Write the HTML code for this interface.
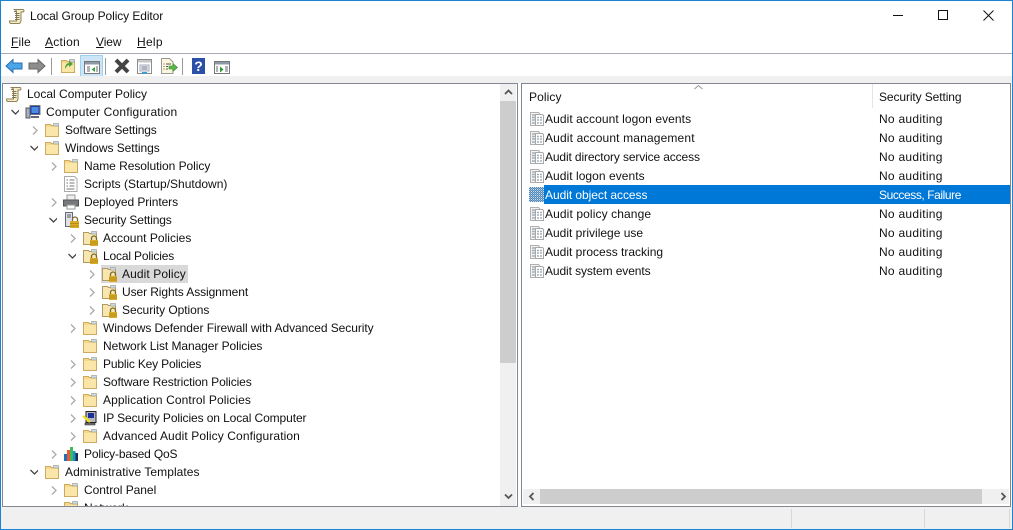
<!DOCTYPE html>
<html><head><meta charset="utf-8"><title>Local Group Policy Editor</title>
<style>
html,body{margin:0;padding:0;background:#fff}
body{width:1013px;height:530px;position:relative;overflow:hidden;font:12px "Liberation Sans",sans-serif;color:#111}
div,svg{position:absolute}
.t{white-space:nowrap;line-height:18px;height:18px;letter-spacing:0}
.n{letter-spacing:.27px}
.i{width:16px;height:16px}
.c{width:8px;height:10px}
</style></head><body>
<svg width="0" height="0" style="left:0;top:0">
<defs>
<symbol id="f" viewBox="0 0 16 16"><path d="M1.500 2.500h5l1 1h7v11h-13z" fill="#f5d88a" stroke="#cdaa62"/><path d="M2 5h12v9H2z" fill="#fae6a8"/><path d="M9.500 1.500h5V4h-5z" fill="#c6dcec" stroke="#a9a594" stroke-width=".7"/></symbol>
<symbol id="l" viewBox="0 0 16 16"><path d="M1.500 2.500h5l1 1h7v11h-13z" fill="#f8e6b0" stroke="#b19a62"/><path d="M9.500 1.500h5V4h-5z" fill="#c6dcec" stroke="#a9a594" stroke-width=".7"/><path d="M9.500 10V8.500a2.500 2.500 0 0 1 5 0V10" fill="none" stroke="#7a6a30" stroke-width="1.300"/><path d="M8 10h8v6H8z" fill="#dcae28"/><path d="M8 12h8M8 14h8" stroke="#a88010" stroke-width=".7"/></symbol>
<symbol id="p" viewBox="0 0 16 16"><path d="M1.500 1.500h8l1 1v12h-9z" fill="#f2f2f2" stroke="#b0b0b0"/><path d="M6.500 3.500h7l1 1v10h-8z" fill="#fff" stroke="#a8a8a8"/><path d="M3 4h3M3 6.500h3M8 6.500h2M11 6.500h2M8 9h2M11 9h2M8 12h2M11 12h2M3 9h3M3 12h3" stroke="#a4aeb8" stroke-width="1.400"/></symbol>
<symbol id="s" viewBox="0 0 16 16"><path d="M4.500 1.500h9.500c1.200 0 1.200 2.500 0 2.500h-2v8.500c0 1.500-1 3-2 3H2c-1 0-1.500-1.200-1.500-2.500h7V3.500c0-1-1.500-2-3-2z" fill="#f6ecc6" stroke="#8e8358"/><path d="M5 3.500c1 0 2.500 0 2.500 0M6 5.500h4.500M6 7.500h4.500M6 9.500h4.500M6 11.500h4.500" stroke="#80775a"/></symbol>
</defs>
</svg>

<div style="left:0;top:0;width:1013px;height:1px;background:#1a83d4"></div>
<div style="left:0;top:0;width:1px;height:530px;background:#1a83d4"></div>
<div style="right:0;top:0;width:1px;height:530px;background:#1a83d4"></div>
<div style="left:0;bottom:0;width:1013px;height:1px;background:#1a83d4"></div>

<!-- title bar -->
<svg class="i" style="left:9px;top:8px"><use href="#s"/></svg>
<div class="t" style="left:30px;top:7px;letter-spacing:-.09px">Local Group Policy Editor</div>
<div style="left:893px;top:15px;width:10px;height:1px;background:#111"></div>
<div style="left:938px;top:10px;width:8px;height:8px;border:1px solid #111"></div>
<svg style="left:983px;top:10px" width="11" height="11"><path d="M.5.500l10 10M10.500.500l-10 10" stroke="#111" fill="none"/></svg>

<!-- menu -->
<div class="t n" style="left:11px;top:33px;letter-spacing:.1px"><u>F</u>ile</div>
<div class="t n" style="left:45px;top:33px"><u>A</u>ction</div>
<div class="t n" style="left:96px;top:33px;letter-spacing:-.1px"><u>V</u>iew</div>
<div class="t n" style="left:137px;top:33px"><u>H</u>elp</div>
<div style="left:1px;top:53px;width:1011px;height:1px;background:#a9a9b8"></div>

<!-- toolbar -->
<svg style="left:5px;top:58px" width="18" height="16"><path d="M1 8l7-6.500V5h9v6H8v3.500z" fill="#4aa6e8" stroke="#2a6fb0"/></svg>
<svg style="left:28px;top:58px" width="18" height="16"><path d="M17 8l-7-6.500V5H1v6h9v3.500z" fill="#8d8d8d" stroke="#666"/></svg>
<div style="left:51px;top:58px;width:1px;height:17px;background:#999"></div>
<svg class="i" style="left:60px;top:58px"><use href="#f"/><path d="M5 11c0-4 2-6 4-6V2.500L13 6 9 9V7c-1 0-2 1-4 4z" fill="#4da33a"/></svg>
<div style="left:80px;top:55px;width:21px;height:20px;background:#cde6f7;border:1px solid #9fd0f0"></div>
<svg class="i" style="left:84px;top:59px"><path d="M.5 2.500h15v12H.5z" fill="#fff" stroke="#777"/><path d="M1 3h14v2.500H1z" fill="#8d99a6"/><path d="M3 8h3M3 10h3M3 12h3M12 8h2M12 10h2M12 12h2" stroke="#667"/><path d="M11 8v5l-3.500-2.500z" fill="#3aa23a"/></svg>
<div style="left:105px;top:58px;width:1px;height:17px;background:#999"></div>
<svg class="i" style="left:114px;top:58px"><path d="M2 2l12 12M14 2L2 14" stroke="#444" stroke-width="4"/></svg>
<svg class="i" style="left:137px;top:58px"><path d="M.5 1.500h14v14H.5z" fill="#fff" stroke="#8c8c8c"/><path d="M1 2h13v2.500H1z" fill="#c4c9ce"/><path d="M3 7h9v6H3z" fill="#eef2f6" stroke="#aab"/><path d="M5 14h5v1.500H5z" fill="#28a0e0"/><path d="M4.500 9h6M4.500 11h6" stroke="#778"/></svg>
<svg class="i" style="left:160px;top:58px;width:18px"><path d="M1.500.500h8l3.500 3.500v11.500h-11.500z" fill="#fbf6dc" stroke="#999"/><path d="M3.500 6h1M3.500 8.500h1M3.500 11h1M6 6h5M6 8.500h2M6 11h2" stroke="#555"/><path d="M9 8h4V5.500L17.500 9.500 13 13.500V11H9z" fill="#56b848" stroke="#388a2c" stroke-width=".6"/></svg>
<div style="left:182px;top:58px;width:1px;height:17px;background:#999"></div>
<div style="left:192px;top:58px;width:13px;height:16px;background:#2c4fa8;border:0;color:#fff;font:bold 14px/16px 'Liberation Sans',sans-serif;text-align:center">?</div>
<svg class="i" style="left:214px;top:60px"><path d="M.5 1.500h15v12H.5z" fill="#fff" stroke="#777"/><path d="M1 2h14v2.500H1z" fill="#8d99a6"/><path d="M11 7h3M11 9h3M11 11h3M2 7h2M2 9h2M2 11h2" stroke="#667"/><path d="M6 6.500v6l3.500-3z" fill="#2d9a2d"/></svg>

<div style="left:1px;top:76px;width:1011px;height:7px;background:#f0f0f0"></div>

<!-- tree pane -->
<div style="left:2px;top:83px;width:514px;height:422px;border:1px solid #828790;overflow:hidden;background:#fff" id="tree">

<svg class="i" style="left:3px;top:2px"><use href="#s"/></svg>
<div class="t" style="left:24px;top:1px">Local Computer Policy</div>

<svg class="c" style="left:8px;top:24px"><path d="M.5 2l4 4 4-4" fill="none" stroke="#444" stroke-width="1.300"/></svg>
<svg class="i" style="left:22px;top:20px"><path d="M5 1.500h10v9H5z" fill="#1c3fa8" stroke="#777"/><path d="M6.500 3h7v6h-7z" fill="#4b8be0"/><path d="M1 4h4v10H1z" fill="#a8b0b8" stroke="#556"/><path d="M6 12h8v2H6z" fill="#667"/></svg>
<div class="t" style="left:43px;top:19px;letter-spacing:.18px">Computer Configuration</div>

<svg class="c" style="left:28px;top:42px"><path d="M2 .5l4 4-4 4" fill="none" stroke="#aaa" stroke-width="1.300"/></svg>
<svg class="i" style="left:41px;top:38px"><use href="#f"/></svg>
<div class="t" style="left:62px;top:37px;letter-spacing:-.14px">Software Settings</div>

<svg class="c" style="left:27px;top:60px"><path d="M.5 2l4 4 4-4" fill="none" stroke="#444" stroke-width="1.300"/></svg>
<svg class="i" style="left:41px;top:56px"><use href="#f"/></svg>
<div class="t" style="left:62px;top:55px;letter-spacing:-.04px">Windows Settings</div>

<svg class="c" style="left:47px;top:78px"><path d="M2 .5l4 4-4 4" fill="none" stroke="#aaa" stroke-width="1.300"/></svg>
<svg class="i" style="left:60px;top:74px"><use href="#f"/></svg>
<div class="t" style="left:81px;top:73px;letter-spacing:-.05px">Name Resolution Policy</div>

<svg class="i" style="left:60px;top:92px"><path d="M1.500.500h10l2.500 2.500v12.500h-12.500z" fill="#fff" stroke="#aaa"/><path d="M3.500 4h1.500M3.500 7h1.500M3.500 10h1.500M6.500 4h5M6.500 7h5M6.500 10h5M3.500 13h8" stroke="#777"/></svg>
<div class="t" style="left:81px;top:91px">Scripts (Startup/Shutdown)</div>

<svg class="c" style="left:47px;top:114px"><path d="M2 .5l4 4-4 4" fill="none" stroke="#aaa" stroke-width="1.300"/></svg>
<svg class="i" style="left:60px;top:110px"><path d="M4 1h8v5H4z" fill="#eee" stroke="#999"/><path d="M.5 6h15v6H.5z" fill="#77797c" stroke="#555"/><path d="M4 11h8v4H4z" fill="#fff" stroke="#999"/></svg>
<div class="t" style="left:81px;top:109px;letter-spacing:-.08px">Deployed Printers</div>

<svg class="c" style="left:46px;top:132px"><path d="M.5 2l4 4 4-4" fill="none" stroke="#444" stroke-width="1.300"/></svg>
<svg class="i" style="left:60px;top:128px"><path d="M2.500.500h7v14h-7z" fill="#dfe3e8" stroke="#667"/><path d="M4 3h4M4 5h4" stroke="#556"/><path d="M9.500 9V7.500a2.500 2.500 0 0 1 5 0V9" fill="none" stroke="#7a6a30" stroke-width="1.300"/><path d="M7 9h9v7H7z" fill="#dcae28"/><path d="M7 11.500h9M7 14h9" stroke="#a88010" stroke-width=".7"/></svg>
<div class="t" style="left:81px;top:127px;letter-spacing:-.14px">Security Settings</div>

<svg class="c" style="left:66px;top:150px"><path d="M2 .5l4 4-4 4" fill="none" stroke="#aaa" stroke-width="1.300"/></svg>
<svg class="i" style="left:79px;top:146px"><use href="#l"/></svg>
<div class="t" style="left:100px;top:145px;letter-spacing:.02px">Account Policies</div>

<svg class="c" style="left:65px;top:168px"><path d="M.5 2l4 4 4-4" fill="none" stroke="#444" stroke-width="1.300"/></svg>
<svg class="i" style="left:79px;top:164px"><use href="#l"/></svg>
<div class="t" style="left:100px;top:163px;letter-spacing:-.16px">Local Policies</div>

<div style="left:98px;top:181px;width:87px;height:18px;background:#d9d9d9"></div>
<svg class="c" style="left:85px;top:186px"><path d="M2 .5l4 4-4 4" fill="none" stroke="#aaa" stroke-width="1.300"/></svg>
<svg class="i" style="left:98px;top:182px"><use href="#l"/></svg>
<div class="t" style="left:119px;top:181px;letter-spacing:.1px">Audit Policy</div>

<svg class="c" style="left:85px;top:204px"><path d="M2 .5l4 4-4 4" fill="none" stroke="#aaa" stroke-width="1.300"/></svg>
<svg class="i" style="left:98px;top:200px"><use href="#l"/></svg>
<div class="t" style="left:119px;top:199px;letter-spacing:-.09px">User Rights Assignment</div>

<svg class="c" style="left:85px;top:222px"><path d="M2 .5l4 4-4 4" fill="none" stroke="#aaa" stroke-width="1.300"/></svg>
<svg class="i" style="left:98px;top:218px"><use href="#l"/></svg>
<div class="t" style="left:119px;top:217px;letter-spacing:-.04px">Security Options</div>

<svg class="c" style="left:66px;top:240px"><path d="M2 .5l4 4-4 4" fill="none" stroke="#aaa" stroke-width="1.300"/></svg>
<svg class="i" style="left:79px;top:236px"><use href="#f"/></svg>
<div class="t" style="left:100px;top:235px;letter-spacing:-.06px">Windows Defender Firewall with Advanced Security</div>

<svg class="i" style="left:79px;top:254px"><use href="#f"/></svg>
<div class="t" style="left:100px;top:253px;letter-spacing:-.07px">Network List Manager Policies</div>

<svg class="c" style="left:66px;top:276px"><path d="M2 .5l4 4-4 4" fill="none" stroke="#aaa" stroke-width="1.300"/></svg>
<svg class="i" style="left:79px;top:272px"><use href="#f"/></svg>
<div class="t" style="left:100px;top:271px;letter-spacing:-.17px">Public Key Policies</div>

<svg class="c" style="left:66px;top:294px"><path d="M2 .5l4 4-4 4" fill="none" stroke="#aaa" stroke-width="1.300"/></svg>
<svg class="i" style="left:79px;top:290px"><use href="#f"/></svg>
<div class="t" style="left:100px;top:289px;letter-spacing:-.12px">Software Restriction Policies</div>

<svg class="c" style="left:66px;top:312px"><path d="M2 .5l4 4-4 4" fill="none" stroke="#aaa" stroke-width="1.300"/></svg>
<svg class="i" style="left:79px;top:308px"><use href="#f"/></svg>
<div class="t" style="left:100px;top:307px;letter-spacing:.09px">Application Control Policies</div>

<svg class="c" style="left:66px;top:330px"><path d="M2 .5l4 4-4 4" fill="none" stroke="#aaa" stroke-width="1.300"/></svg>
<svg class="i" style="left:79px;top:326px"><path d="M4 1.500h10v11H4z" fill="#b4b8bc" stroke="#222"/><path d="M6 3h6v5H6z" fill="#1a2f9a"/><path d="M3 13h10v2H3z" fill="#777" stroke="#222" stroke-width=".6"/><path d="M1 6l7 6" stroke="#f0e020" stroke-width="2.400"/></svg>
<div class="t" style="left:100px;top:325px;letter-spacing:-.1px">IP Security Policies on Local Computer</div>

<svg class="c" style="left:66px;top:348px"><path d="M2 .5l4 4-4 4" fill="none" stroke="#aaa" stroke-width="1.300"/></svg>
<svg class="i" style="left:79px;top:344px"><use href="#f"/></svg>
<div class="t" style="left:100px;top:343px;letter-spacing:.1px">Advanced Audit Policy Configuration</div>

<svg class="c" style="left:47px;top:366px"><path d="M2 .5l4 4-4 4" fill="none" stroke="#aaa" stroke-width="1.300"/></svg>
<svg class="i" style="left:60px;top:362px"><path d="M1 8h3v7H1z" fill="#1d6fc0"/><path d="M4 4h3v11H4z" fill="#e85c30"/><path d="M7 1h3v14H7z" fill="#40b860"/><path d="M10 5h2.500v10H10z" fill="#1d8fd0"/><path d="M12.500 7H15v8h-2.500z" fill="#17324f"/></svg>
<div class="t" style="left:81px;top:361px;letter-spacing:-.17px">Policy-based QoS</div>

<svg class="c" style="left:27px;top:384px"><path d="M.5 2l4 4 4-4" fill="none" stroke="#444" stroke-width="1.300"/></svg>
<svg class="i" style="left:41px;top:380px"><use href="#f"/></svg>
<div class="t" style="left:62px;top:379px;letter-spacing:.06px">Administrative Templates</div>

<svg class="c" style="left:47px;top:402px"><path d="M2 .5l4 4-4 4" fill="none" stroke="#aaa" stroke-width="1.300"/></svg>
<svg class="i" style="left:60px;top:398px"><use href="#f"/></svg>
<div class="t" style="left:81px;top:397px;letter-spacing:-.04px">Control Panel</div>

<svg class="i" style="left:60px;top:416px"><use href="#f"/></svg>
<div class="t" style="left:81px;top:415px">Network</div>

<!-- tree scrollbar -->
<div style="left:497px;top:0;width:16px;height:422px;background:#f0f0f0"></div>
<div style="left:497px;top:17px;width:16px;height:262px;background:#cdcdcd"></div>
<svg style="left:501px;top:5px" width="9" height="7"><path d="M1 5l3.500-3.500L8 5" fill="none" stroke="#555" stroke-width="1.800"/></svg>
<svg style="left:501px;top:409px" width="9" height="7"><path d="M1 1.500l3.500 3.500L8 1.500" fill="none" stroke="#555" stroke-width="1.800"/></svg>
</div>

<!-- list pane -->
<div style="left:521px;top:83px;width:488px;height:422px;border:1px solid #828790;background:#fff;overflow:hidden">
<svg style="left:172px;top:1px" width="9" height="5"><path d="M.5 4L4.500.5 8.500 4" fill="none" stroke="#999"/></svg>
<div class="t" style="left:7px;top:4px;letter-spacing:.1px">Policy</div>
<div style="left:350px;top:0;width:1px;height:24px;background:#e5e5e5"></div>
<div class="t" style="left:357px;top:4px;letter-spacing:-.1px">Security Setting</div>

<svg class="i" style="left:7px;top:27px"><use href="#p"/></svg>
<div class="t" style="left:23px;top:26px;letter-spacing:.08px">Audit account logon events</div>
<div class="t n" style="left:357px;top:26px">No auditing</div>

<svg class="i" style="left:7px;top:46px"><use href="#p"/></svg>
<div class="t" style="left:23px;top:45px;letter-spacing:.15px">Audit account management</div>
<div class="t n" style="left:357px;top:45px">No auditing</div>

<svg class="i" style="left:7px;top:65px"><use href="#p"/></svg>
<div class="t" style="left:23px;top:64px;letter-spacing:-.13px">Audit directory service access</div>
<div class="t n" style="left:357px;top:64px">No auditing</div>

<svg class="i" style="left:7px;top:84px"><use href="#p"/></svg>
<div class="t" style="left:23px;top:83px;letter-spacing:.05px">Audit logon events</div>
<div class="t n" style="left:357px;top:83px">No auditing</div>

<div style="left:22px;top:101px;width:466px;height:19px;background:#0078d7"></div>
<svg class="i" style="left:7px;top:103px"><defs><pattern id="d" width="2" height="2" patternUnits="userSpaceOnUse"><rect width="2" height="2" fill="#3f8fd0"/><rect width="1" height="1" fill="#d8d8d8"/><rect x="1" y="1" width="1" height="1" fill="#9aa8b4"/></pattern></defs><rect width="15" height="15" fill="url(#d)"/></svg>
<div class="t" style="left:23px;top:102px;color:#fff;letter-spacing:-.05px">Audit object access</div>
<div class="t" style="left:357px;top:102px;color:#fff;letter-spacing:-.42px">Success, Failure</div>

<svg class="i" style="left:7px;top:122px"><use href="#p"/></svg>
<div class="t" style="left:23px;top:121px;letter-spacing:.11px">Audit policy change</div>
<div class="t n" style="left:357px;top:121px">No auditing</div>

<svg class="i" style="left:7px;top:141px"><use href="#p"/></svg>
<div class="t" style="left:23px;top:140px">Audit privilege use</div>
<div class="t n" style="left:357px;top:140px">No auditing</div>

<svg class="i" style="left:7px;top:160px"><use href="#p"/></svg>
<div class="t" style="left:23px;top:159px">Audit process tracking</div>
<div class="t n" style="left:357px;top:159px">No auditing</div>

<svg class="i" style="left:7px;top:179px"><use href="#p"/></svg>
<div class="t" style="left:23px;top:178px;letter-spacing:-.1px">Audit system events</div>
<div class="t n" style="left:357px;top:178px">No auditing</div>

<!-- h scrollbar -->
<div style="left:1px;top:405px;width:486px;height:15px;background:#f0f0f0"></div>
<div style="left:18px;top:405px;width:442px;height:15px;background:#cdcdcd"></div>
<svg style="left:6px;top:408px" width="7" height="9"><path d="M5.500 1L2 4.500 5.500 8" fill="none" stroke="#555" stroke-width="1.800"/></svg>
<svg style="left:478px;top:408px" width="7" height="9"><path d="M1.500 1L5 4.500 1.500 8" fill="none" stroke="#555" stroke-width="1.800"/></svg>
</div>

<!-- status bar -->
<div style="left:1px;top:507px;width:1011px;height:22px;background:#f0f0f0"></div>
<div style="left:791px;top:509px;width:1px;height:19px;background:#d8d8d8"></div>
<div style="left:924px;top:509px;width:1px;height:19px;background:#d8d8d8"></div>
<div style="left:1009px;top:509px;width:1px;height:19px;background:#d8d8d8"></div>
</body></html>
